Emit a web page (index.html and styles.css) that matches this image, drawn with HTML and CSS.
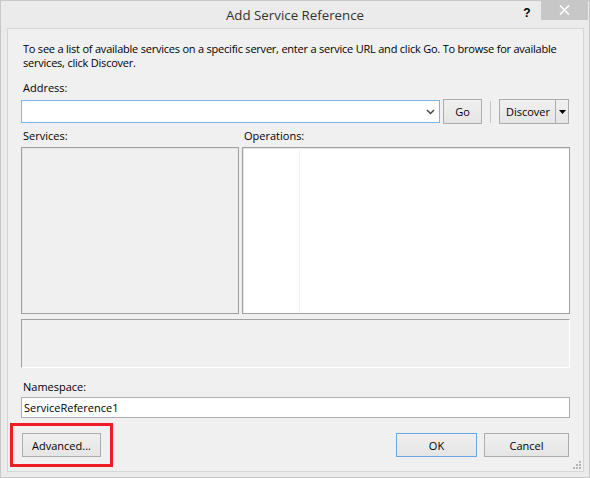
FILE: index.html
```html
<!DOCTYPE html>
<html>
<head>
<meta charset="utf-8">
<link rel="stylesheet" href="styles.css">
</head>
<body>
<div class="window">
  <div class="titlebar">
    <div></div>
    <div class="title">Add Service Reference</div>
    <div class="caption">
      <span class="help">?</span>
      <span class="close"><svg width="11" height="10" viewBox="0 0 11 10"><path d="M1 0.5 L10 9.5 M10 0.5 L1 9.5" stroke="#fff" stroke-width="1.6" fill="none"/></svg></span>
    </div>
  </div>
  <div class="client">
    <p class="intro">To see a list of available services on a specific server, enter a service URL and click Go. To browse for available<br>services, click Discover.</p>
    <div class="lbl lbl-address">Address:</div>
    <div class="address-row">
      <div class="combo">
        <span class="chev"><svg width="9" height="6" viewBox="0 0 9 6"><path d="M1 1 L4.5 4.5 L8 1" stroke="#444" stroke-width="1.5" fill="none"/></svg></span>
      </div>
      <button class="btn btn-go">Go</button>
      <span class="sep"></span>
      <div class="btn split">
        <span class="split-main">Discover</span>
        <span class="split-arrow"><svg width="7" height="4" viewBox="0 0 7 4"><path d="M0 0 H7 L3.5 4 Z" fill="#000"/></svg></span>
      </div>
    </div>
    <div class="list-labels">
      <div class="lbl lbl-services">Services:</div>
      <div class="lbl lbl-ops">Operations:</div>
    </div>
    <div class="lists">
      <div class="list services"></div>
      <div class="list operations"><div class="ops-col"></div></div>
    </div>
    <div class="desc"></div>
    <div class="lbl lbl-ns">Namespace:</div>
    <div class="ns-input">ServiceReference1</div>
    <div class="footer">
      <div class="adv-wrap">
        <button class="btn btn-adv">Advanced...</button>
        <span class="highlight"></span>
      </div>
      <div class="spacer"></div>
      <button class="btn btn-ok">OK</button>
      <button class="btn btn-cancel">Cancel</button>
    </div>
    <svg class="grip" width="9" height="9" viewBox="0 0 9 9">
      <g fill="#b4b4b4">
        <rect x="7" y="1" width="2" height="2"/>
        <rect x="4" y="4" width="2" height="2"/>
        <rect x="7" y="4" width="2" height="2"/>
        <rect x="1" y="7" width="2" height="2"/>
        <rect x="4" y="7" width="2" height="2"/>
        <rect x="7" y="7" width="2" height="2"/>
      </g>
    </svg>
  </div>
</div>
</body>
</html>
```

FILE: styles.css
```css
* { box-sizing: border-box; }
html, body {
  margin: 0;
  padding: 0;
  width: 590px;
  height: 478px;
  overflow: hidden;
  font-family: "Open Sans", "Noto Sans", "Liberation Sans", sans-serif;
  font-size: 11px;
  color: #000;
}
.window {
  width: 590px;
  height: 478px;
  background: #ebebeb;
  border: 1px solid #c8c8c8;
  display: flex;
  flex-direction: column;
}
.titlebar {
  height: 27px;
  flex: none;
  display: grid;
  grid-template-columns: 1fr auto 1fr;
  align-items: center;
}
.title {
  font-size: 13.3px;
  color: #333;
  padding-top: 1px;
}
.caption {
  display: flex;
  justify-content: flex-end;
  align-self: start;
  padding-right: 1px;
}
.help {
  width: 20px;
  text-align: center;
  font-weight: bold;
  font-size: 12px;
  color: #000;
  line-height: 18px;
  margin-top: 3px;
  margin-right: 4px;
  font-family: "Liberation Sans", sans-serif;
}
.close {
  width: 47px;
  height: 20px;
  margin-top: -1px;
  background: #c7c7c7;
  display: flex;
  align-items: center;
  justify-content: center;
}
.client {
  position: relative;
  flex: 1;
  margin: 0 5px 5px 6px;
  background: #f0f0f0;
  border: 1px solid #d6d6d6;
  padding: 13px 13px 0 13px;
  display: flex;
  flex-direction: column;
}
.intro {
  margin: 0;
  line-height: 14px;
  padding-left: 2px;
  white-space: nowrap;
  letter-spacing: -0.22px;
}
.lbl {
  line-height: 14px;
  padding-left: 2px;
}
.lbl-address { margin-top: 11px; }
.address-row {
  margin-top: 4px;
  height: 25px;
  display: flex;
  align-items: center;
}
.combo {
  width: 419px;
  height: 23px;
  background: #fff;
  border: 1px solid #7eb4ea;
  display: flex;
  justify-content: flex-end;
  align-items: center;
}
.chev {
  width: 17px;
  display: flex;
  justify-content: center;
  padding-top: 1px;
}
.btn {
  font-family: inherit;
  font-size: 11px;
  color: #000;
  background: linear-gradient(#f0f0f0, #e5e5e5);
  border: 1px solid #acacac;
  border-radius: 0;
  padding: 0;
  margin: 0;
}
.btn-go {
  width: 39px;
  height: 25px;
  margin-left: 3px;
}
.sep {
  width: 1px;
  height: 22px;
  background: #c4c4c4;
  margin: 0 8px;
}
.split {
  width: 70px;
  height: 25px;
  display: flex;
  align-items: stretch;
}
.split-main {
  width: 56px;
  border-right: 1px solid #acacac;
  display: flex;
  align-items: center;
  justify-content: center;
  padding-left: 1px;
}
.split-arrow {
  flex: 1;
  display: flex;
  align-items: center;
  justify-content: center;
  padding-top: 1px;
}
.list-labels {
  margin-top: 5px;
  display: flex;
}
.lbl-services { width: 221px; }
.lists {
  margin-top: 4px;
  height: 167px;
  display: flex;
  gap: 3px;
}
.list {
  border: 1px solid #a0a0a0;
  box-shadow: inset 1px 1px 0 #e6e6e6;
}
.services {
  width: 218px;
  background: #f0f0f0;
}
.operations {
  flex: 1;
  background: #fff;
  padding-left: 56px;
}
.ops-col {
  width: 1px;
  height: 100%;
  background: #eef3f9;
}
.desc {
  margin-top: 5px;
  height: 49px;
  border-top: 1px solid #a0a0a0;
  border-left: 1px solid #a0a0a0;
  border-right: 1px solid #fff;
  border-bottom: 1px solid #fff;
  background: #f0f0f0;
}
.lbl-ns { margin-top: 12px; }
.ns-input {
  margin-top: 3px;
  height: 21px;
  background: #fff;
  border: 1px solid #abadb3;
  line-height: 19px;
  padding-left: 2px;
}
.footer {
  margin-top: 15px;
  display: flex;
  align-items: center;
  padding-right: 1px;
}
.adv-wrap {
  position: relative;
  margin-left: 1px;
}
.btn-adv {
  display: block;
  width: 79px;
  height: 24px;
}
.highlight {
  position: absolute;
  top: -10px;
  left: -12px;
  right: -12px;
  bottom: -10px;
  border: 3px solid #ee1c24;
}
.spacer { flex: 1; }
.btn-ok {
  width: 81px;
  height: 24px;
  border-color: #6aa5e6;
}
.btn-cancel {
  width: 85px;
  height: 24px;
  margin-left: 7px;
}
.grip {
  position: absolute;
  right: 2px;
  bottom: 2px;
}
```
